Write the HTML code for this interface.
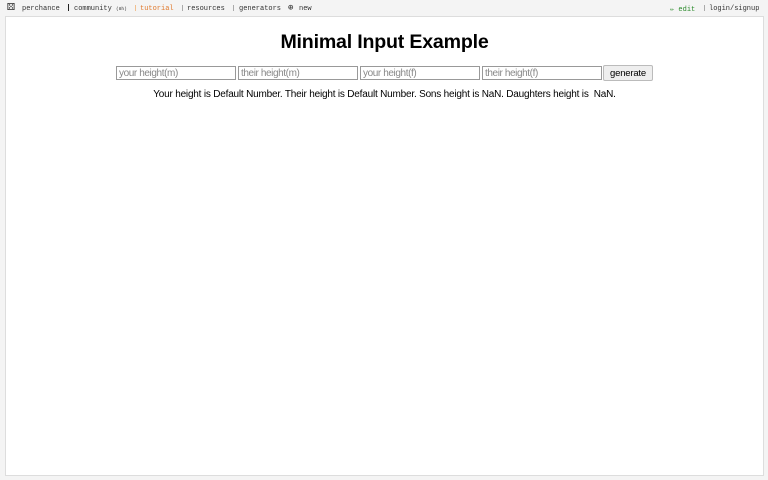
<!DOCTYPE html>
<html><head><meta charset="utf-8"><style>
html,body{margin:0;padding:0;width:768px;height:480px;background:#f4f4f4;overflow:hidden;font-family:"Liberation Sans",sans-serif;}
.bar{position:absolute;top:0;left:0;width:768px;height:16px;font-family:"Liberation Mono",monospace;font-size:7px;color:#333;}
.bar span{position:absolute;top:5px;white-space:nowrap}
.card{position:absolute;left:5px;top:16px;width:757px;height:458px;background:#fff;border:1px solid #ddd;}
h1{position:absolute;left:0;width:757px;top:14px;margin:0;text-align:center;font-size:19.6px;font-weight:bold;color:#000;letter-spacing:-0.2px}
.in{position:absolute;top:49px;width:116px;height:12px;border:1px solid #999;font-size:10px;color:#888;line-height:13px;padding-left:2px;letter-spacing:-0.4px}
.btn{position:absolute;top:48px;left:597px;width:48px;height:14px;border:1px solid #bbb;background:#eee;font-size:9.5px;line-height:15px;text-align:center;color:#000;border-radius:2px;letter-spacing:-0.2px}
.out{position:absolute;top:72px;left:0;width:757px;text-align:center;font-size:10px;color:#000;letter-spacing:-0.2px}
.ph{position:absolute;top:5px;width:1px;height:6px;background:#aaa}
</style></head><body>
<div class="bar">
<span style="left:7px;font-size:13px;top:-1px;color:#222">⚄</span>
<span style="left:22px">perchance</span>
<i class="ph" style="left:68px;background:#222;height:7px;top:4px"></i>
<span style="left:74px">community <small style="font-size:4.5px">(8h)</small></span>
<i class="ph" style="left:135px;background:#f0c090"></i>
<span style="left:140px;color:#e07a2e">tutorial</span>
<i class="ph" style="left:182px"></i>
<span style="left:187px">resources</span>
<i class="ph" style="left:233px"></i>
<span style="left:239px">generators</span>
<span style="left:288px;font-size:9px;top:3px">⊕</span>
<span style="left:299px">new</span>
<span style="left:670px;color:#2a8a2a">✏ edit</span>
<i class="ph" style="left:704px"></i>
<span style="left:709px">login/signup</span>
</div>
<div class="card">
<h1>Minimal Input Example</h1>
<div class="in" style="left:110px">your height(m)</div>
<div class="in" style="left:232px">their height(m)</div>
<div class="in" style="left:354px">your height(f)</div>
<div class="in" style="left:476px">their height(f)</div>
<div class="btn">generate</div>
<div class="out">Your height is Default Number. Their height is Default Number. Sons height is NaN. Daughters height is &nbsp;NaN.</div>
</div>
</body></html>
